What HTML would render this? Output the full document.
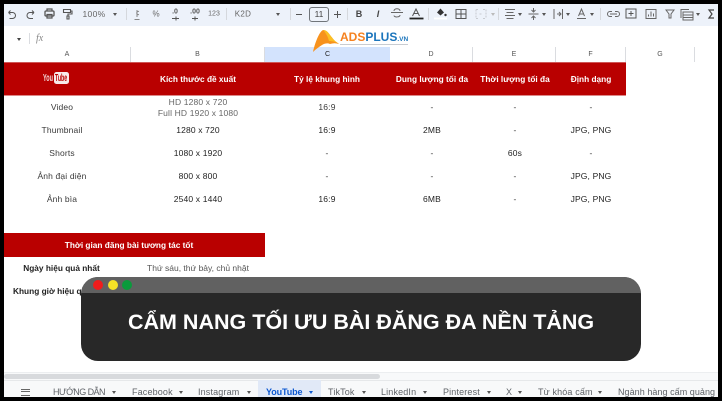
<!DOCTYPE html>
<html lang="vi">
<head>
<meta charset="utf-8">
<style>
html,body{margin:0;padding:0;background:#000}
#p{position:relative;width:722px;height:401px;overflow:hidden;background:#000;font-family:"Liberation Sans","Noto Sans CJK SC",sans-serif}
.a{position:absolute;white-space:nowrap}
.c{position:absolute;white-space:nowrap;transform:translate(-50%,-50%);font-size:8.5px;color:#3a3a3a;letter-spacing:.15px}
.h{position:absolute;white-space:nowrap;transform:translate(-50%,-50%);font-size:8.3px;color:#fff;font-weight:bold}
.t{position:absolute;white-space:nowrap;top:391.5px;transform:translateY(-50%);font-size:9px;color:#5f6368;letter-spacing:.15px}
.col{position:absolute;top:47px;height:15px;background:#fff;border-right:1px solid #dadce0;box-sizing:border-box;font-size:7px;color:#555;text-align:center;line-height:16px}
.tb{position:absolute;white-space:nowrap;transform:translate(-50%,-50%);font-size:8px;color:#666;top:14px}
.sep{position:absolute;top:8px;width:1px;height:12px;background:#d5d8dd}
svg{position:absolute;overflow:visible}
.ar{position:absolute;width:0;height:0;border-left:2.5px solid transparent;border-right:2.5px solid transparent;border-top:3px solid #555}
</style>
</head>
<body>
<div id="p">
<div class="a" style="left:4px;top:4px;width:714px;height:393px;background:#fff"></div>
<!-- toolbar -->
<div class="a" style="left:4px;top:4px;width:714px;height:22px;background:#edf2fa"></div>
<svg style="left:0;top:0" width="722" height="30" fill="none" stroke="#666" stroke-width="1">
<path d="M8.500 12.500h4a3 3 0 0 1 0 6h-3M8.500 12.500l2-2M8.500 12.500l2 2" stroke="#555"/>
<path d="M34 12.500h-4a3 3 0 0 0 0 6h3M34 12.500l-2-2M34 12.500l-2 2" stroke="#555"/>
<rect x="45" y="11" width="9" height="5" rx="1" stroke="#555" stroke-width="1.300"/>
<path d="M47 11V9h5v2M47 14.500h5V18h-5z" stroke="#555" stroke-width="1.200"/>
<path d="M63.500 9.500h7v3h-7zM70.500 11h1.500v3h-4v2M67 16h2v3h-2z" stroke="#555" stroke-width="1.100"/>
<path d="M137 10v7M134.500 19.500h5M139 11.500c-3-1-3 4 0 3" stroke="#888"/>
<path d="M172 18.500h7M176 16.500v4M198 18.500h-6M195 16.500v4" stroke="#555"/>
<path d="M391 12.500h12M394 11c0-3 6-3 6 0M400 15c0 2.500-6 2.500-6 .5" stroke="#666"/>
<path d="M412.500 16l3.500-7 3.500 7M414 13.500h4" stroke="#555"/>
<path d="M409.500 18.500h14" stroke="#222" stroke-width="1.800"/>
<path d="M437 12.500l3.500-4 3.500 4-3.500 3z" fill="#333" stroke="none"/>
<circle cx="445.500" cy="15" r="1.200" fill="#333" stroke="none"/>
<path d="M434 18.500h13" stroke="#fff" stroke-width="1.800"/>
<path d="M456 9.500h10v9h-10zM461 9.500v9M456 14h10" stroke="#555"/>
<path d="M476 9.500h3M483 9.500h3M476 18.500h3M483 18.500h3M476 9.500v9M486 9.500v9M479.500 14h3" stroke="#c8cbd0" stroke-dasharray="2 1"/>
<path d="M505 9.500h10M506.500 12.500h7M505 15.500h10M506.500 18.500h7" stroke="#666" stroke-width="1.100"/>
<path d="M533.500 8v4M533.500 16v4M528.500 14h10M531.500 10l2 2 2-2M531.500 18l2-2 2 2" stroke="#666"/>
<path d="M554 9v10M557 14h4M559 12l2 2-2 2M562.500 9v10" stroke="#666"/>
<path d="M578.500 16l3-7 3 7M579.500 14h4M577 18.500h9" stroke="#666"/>
<path d="M612 11.500h-2a2.500 2.500 0 0 0 0 5h2M615 11.500h2a2.500 2.500 0 0 1 0 5h-2M610 14h7" stroke="#666"/>
<rect x="626" y="9" width="10" height="9" stroke="#555"/><path d="M631 11v5M628.500 13.500h5" stroke="#555"/>
<rect x="646" y="9.500" width="10" height="9" stroke="#666"/><path d="M648.500 16.500v-2M651 16.500v-5M653.500 16.500v-3" stroke="#666"/>
<path d="M666 10h8l-3 4v4h-2v-4z" stroke="#666"/>
<rect x="683" y="12" width="10" height="8" stroke="#666"/><path d="M683 15h10M683 17.500h10M681 18V9.500h8" stroke="#666"/>
<path d="M714 10h-5l3 4-3 4h5" stroke="#444" stroke-width="1.200"/>
</svg>
<div class="tb" style="left:94px;font-size:8.500px;letter-spacing:.3px">100%</div><div class="ar" style="left:113px;top:13px"></div>
<div class="sep" style="left:126px"></div>
<div class="tb" style="left:156px;font-size:8px">%</div>
<div class="tb" style="left:175px;top:12px;font-weight:bold;font-size:7px;color:#555">.0</div>
<div class="tb" style="left:195px;top:12px;font-weight:bold;font-size:7px;color:#555">.00</div>
<div class="tb" style="left:214px;font-size:7px">123</div>
<div class="sep" style="left:226px"></div>
<div class="tb" style="left:243px;font-size:8px;letter-spacing:.3px">K2D</div><div class="ar" style="left:276px;top:13px"></div>
<div class="sep" style="left:290px"></div>
<div class="a" style="left:296px;top:13.500px;width:6px;height:1px;background:#555"></div>
<div class="a" style="left:309px;top:7px;width:18px;height:13px;border:1px solid #70757a;border-radius:3px;text-align:center;font-size:8.500px;line-height:13px;color:#444">11</div>
<div class="a" style="left:334px;top:13.500px;width:7px;height:1px;background:#555"></div>
<div class="a" style="left:337px;top:10.500px;width:1px;height:7px;background:#555"></div>
<div class="sep" style="left:347px"></div>
<div class="tb" style="left:359px;font-weight:bold;font-size:9px;color:#444">B</div>
<div class="tb" style="left:378px;font-style:italic;font-weight:bold;font-size:9px;color:#444">I</div>
<div class="sep" style="left:428px"></div>
<div class="sep" style="left:498px"></div>
<div class="sep" style="left:600px"></div>
<div class="ar" style="left:491px;top:13px;border-top-color:#bbb"></div>
<div class="ar" style="left:518px;top:13px"></div>
<div class="ar" style="left:542px;top:13px"></div>
<div class="ar" style="left:566px;top:13px"></div>
<div class="ar" style="left:590px;top:13px"></div>
<div class="ar" style="left:696px;top:13px"></div>
<!-- formula bar -->
<div class="ar" style="left:17px;top:38px;border-top-color:#444"></div>
<div class="a" style="left:29px;top:33px;width:1px;height:11px;background:#dadce0"></div>
<div class="a" style="left:36px;top:33px;font-family:'Liberation Serif',serif;font-style:italic;font-size:10px;color:#888">fx</div>
<!-- column headers -->
<div class="a" style="left:4px;top:47px;width:714px;height:1px;background:#dadce0"></div>
<div class="col" style="left:4px;width:127px">A</div>
<div class="col" style="left:131px;width:134px">B</div>
<div class="col" style="left:265px;width:125px;background:#d3e3fd;color:#222;border-right:0">C</div>
<div class="col" style="left:390px;width:83px">D</div>
<div class="col" style="left:473px;width:83px">E</div>
<div class="col" style="left:556px;width:70px">F</div>
<div class="col" style="left:626px;width:69px">G</div>
<div class="col" style="left:695px;width:23px;border-right:0"></div>
<!-- logo -->
<svg style="left:312px;top:28px" width="32" height="26" viewBox="0 0 32 26">
<path d="M1 24C3 15 7 4 11 2c3 0 5 2 7 5l4 5c2 2 4 3 5 4-3-1-6-1-9 0-2-1-5-1-8 1-3 2-6 4-9 7z" fill="#f7921e"/>
<path d="M11 2c3 0 5 2 7 5l4 5c2 2 4 3 5 4-3-2-6-3-10-3-1-4-3-8-6-11z" fill="#fbbf24"/>
</svg>
<div class="a" style="left:340px;top:30px;font-size:12px;font-weight:bold;line-height:15px"><span style="color:#f58220">ADS</span><span style="color:#1b75bc">PLUS</span><span style="color:#1b75bc;font-size:6.500px">.VN</span></div>
<div class="a" style="left:340px;top:44px;width:68px;height:1px;background:#c9ccd1"></div>
<!-- header row -->
<div class="a" style="left:4px;top:62px;width:622px;height:34px;background:#b90000;border-top:1px solid #cf5555;border-bottom:1px solid #d88;box-sizing:border-box"></div>
<div class="a" style="left:43px;top:72px;font-size:10.500px;font-weight:bold;color:#f3d9d9;line-height:12px;transform:scaleX(.52);transform-origin:0 50%">You</div>
<div class="a" style="left:53.500px;top:72px;width:15px;height:12px;background:#f7eaea;border-radius:2.500px"></div>
<div class="a" style="left:55px;top:72px;font-size:10.500px;font-weight:bold;color:#b90000;line-height:12px;transform:scaleX(.5);transform-origin:0 50%">Tube</div>
<div class="h" style="left:198px;top:79px">Kích thước đề xuất</div>
<div class="h" style="left:327px;top:79px">Tỷ lệ khung hình</div>
<div class="h" style="left:432px;top:79px">Dung lượng tối đa</div>
<div class="h" style="left:515px;top:79px">Thời lượng tối đa</div>
<div class="h" style="left:591px;top:79px">Định dạng</div>
<!-- rows -->
<div class="c" style="left:62px;top:107px">Video</div>
<div class="c" style="left:198px;top:102px;color:#666">HD 1280 x 720</div>
<div class="c" style="left:198px;top:113px;color:#666">Full HD 1920 x 1080</div>
<div class="c" style="left:327px;top:107px">16:9</div>
<div class="c" style="left:432px;top:107px">-</div><div class="c" style="left:515px;top:107px">-</div><div class="c" style="left:591px;top:107px">-</div>
<div class="c" style="left:62px;top:130px">Thumbnail</div>
<div class="c" style="left:198px;top:130px;color:#222">1280 x 720</div>
<div class="c" style="left:327px;top:130px;color:#222">16:9</div>
<div class="c" style="left:432px;top:130px;color:#222">2MB</div><div class="c" style="left:515px;top:130px">-</div><div class="c" style="left:591px;top:130px;color:#222">JPG, PNG</div>
<div class="c" style="left:62px;top:153px">Shorts</div>
<div class="c" style="left:198px;top:153px;color:#222">1080 x 1920</div>
<div class="c" style="left:327px;top:153px">-</div>
<div class="c" style="left:432px;top:153px">-</div><div class="c" style="left:515px;top:153px;color:#222">60s</div><div class="c" style="left:591px;top:153px">-</div>
<div class="c" style="left:62px;top:176px">Ảnh đại diện</div>
<div class="c" style="left:198px;top:176px;color:#222">800 x 800</div>
<div class="c" style="left:327px;top:176px">-</div>
<div class="c" style="left:432px;top:176px">-</div><div class="c" style="left:515px;top:176px">-</div><div class="c" style="left:591px;top:176px;color:#222">JPG, PNG</div>
<div class="c" style="left:62px;top:199px">Ảnh bìa</div>
<div class="c" style="left:198px;top:199px;color:#222">2540 x 1440</div>
<div class="c" style="left:327px;top:199px;color:#222">16:9</div>
<div class="c" style="left:432px;top:199px;color:#222">6MB</div><div class="c" style="left:515px;top:199px">-</div><div class="c" style="left:591px;top:199px;color:#222">JPG, PNG</div>
<!-- section 2 -->
<div class="a" style="left:4px;top:233px;width:261px;height:24px;background:#b90000"></div>
<div class="h" style="left:129px;top:245px">Thời gian đăng bài tương tác tốt</div>
<div class="c" style="left:61.500px;top:268px;color:#222;font-weight:bold;letter-spacing:0;font-size:8.300px">Ngày hiệu quả nhất</div>
<div class="c" style="left:198px;top:268px;color:#555;letter-spacing:0;font-size:8.500px">Thứ sáu, thứ bảy, chủ nhật</div>
<div class="a" style="left:13px;top:286px;font-size:8.300px;font-weight:bold;color:#222">Khung giờ hiệu quả</div>
<!-- card -->
<div class="a" style="left:81px;top:277px;width:560px;height:84px;background:#282828;border-radius:17px;overflow:hidden">
<div style="height:16px;background:#616161"></div>
</div>
<div class="a" style="left:93px;top:280px;width:10px;height:10px;border-radius:50%;background:#f01c1c"></div>
<div class="a" style="left:107.500px;top:280px;width:10px;height:10px;border-radius:50%;background:#f6e227"></div>
<div class="a" style="left:121.500px;top:280px;width:10px;height:10px;border-radius:50%;background:#0a9a3c"></div>
<div class="a" id="ti" style="left:128px;top:308px;font-size:21.500px;line-height:28px;font-weight:bold;color:#fff">CẨM NANG TỐI ƯU BÀI ĐĂNG ĐA NỀN TẢNG</div>
<!-- scrollbar and tabs -->
<div class="a" style="left:4px;top:372px;width:714px;height:8px;background:#f8f9fa;border-top:1px solid #eceef0;box-sizing:border-box"></div>
<div class="a" style="left:4px;top:374px;width:376px;height:5px;background:#d8dadd;border-radius:3px"></div>
<div class="a" style="left:4px;top:380px;width:714px;height:17px;background:#f8f9fa;border-top:1px solid #e6e8ea;box-sizing:border-box"></div>
<div class="a" style="left:258px;top:380px;width:63px;height:17px;background:#e1e9f7"></div>
<div class="a" style="left:21px;top:389px;width:9px;height:5px;border-top:1px solid #666;border-bottom:1px solid #666"></div>
<div class="a" style="left:21px;top:391px;width:9px;height:1px;background:#666"></div>
<div style="position:absolute;left:0;top:0;width:718px;height:397px;overflow:hidden">
<div class="t" style="left:53px;letter-spacing:-.55px">HƯỚNG DẪN</div><div class="ar" style="left:111.500px;top:391px"></div>
<div class="t" style="left:132px">Facebook</div><div class="ar" style="left:178.500px;top:391px"></div>
<div class="t" style="left:198px">Instagram</div><div class="ar" style="left:246.500px;top:391px"></div>
<div class="t" style="left:266px;color:#0b57d0;font-weight:bold;letter-spacing:-.1px">YouTube</div><div class="ar" style="left:308.500px;top:391px;border-top-color:#0b57d0"></div>
<div class="t" style="left:328px">TikTok</div><div class="ar" style="left:361.500px;top:391px"></div>
<div class="t" style="left:381px">LinkedIn</div><div class="ar" style="left:422.500px;top:391px"></div>
<div class="t" style="left:443px">Pinterest</div><div class="ar" style="left:486.500px;top:391px"></div>
<div class="t" style="left:506px">X</div><div class="ar" style="left:517.500px;top:391px"></div>
<div class="t" style="left:538px">Từ khóa cấm</div><div class="ar" style="left:597.500px;top:391px"></div>
<div class="t" style="left:618px;letter-spacing:.05px">Ngành hàng cấm quảng</div>
</div>
</div>
</body>
</html>
